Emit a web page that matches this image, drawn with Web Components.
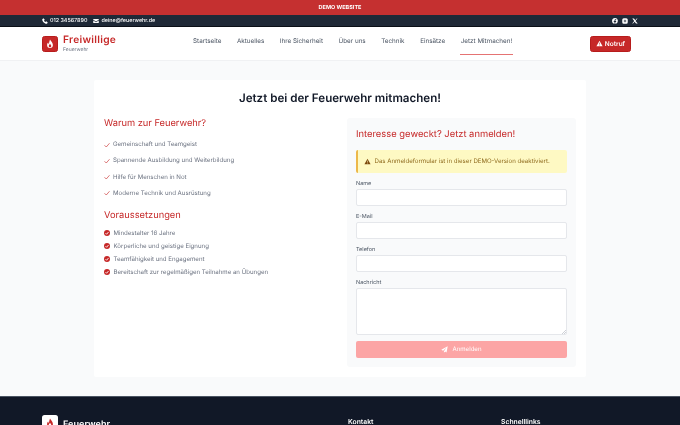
<!DOCTYPE html>
<html lang="de">
<head>
<meta charset="utf-8">
<title>Freiwillige Feuerwehr</title>
<style>
	html, body { margin: 0; padding: 0; }
	body { background: #f9fafb; font-family: Inter, "Liberation Sans", sans-serif; text-rendering: geometricPrecision; height: 425px; overflow: hidden; will-change: transform; }
</style>
</head>
<body>
<fw-topbar></fw-topbar>
<fw-header></fw-header>
<fw-main>
	<fw-benefits></fw-benefits>
	<fw-form></fw-form>
</fw-main>
<fw-footer></fw-footer>

<script>
const flame = '<path fill-rule="evenodd" d="M12 1c1 3.500 7 6.500 7 13.500a7 7 0 0 1-14 0c0-2.500 1-4.500 2.500-6 .3 1.700 1 2.800 2 3.300C10 8.500 10.500 5 12 1zm0 10.500c-.5 1.500-3 3-3 5a3 3 0 0 0 6 0c0-2-2.500-3.500-3-5z"/>';
const warn = '<path d="M12 2.500 1.500 21h21L12 2.500z"/><rect x="11" y="9" width="2" height="6.500" fill="var(--mark,#fff)"/><rect x="11" y="16.800" width="2" height="2" fill="var(--mark,#fff)"/>';

class FwTopbar extends HTMLElement {
	constructor() {
		super();
		this.attachShadow({ mode: 'open' }).innerHTML = `<style>
	:host { display: block; }
	.demo { height: 15px; background: #c53030; color: #fff; font-size: 5.500px; font-weight: 700; display: flex; align-items: center; justify-content: center; }
	.bar { height: 11px; background: #1f2937; border-bottom: 1px solid #0b0f17; color: #fff; padding: 0 42px; display: flex; align-items: center; justify-content: space-between; font-size: 5.400px; font-weight: 500; }
	.group { display: flex; align-items: center; gap: 6px; }
	.item { display: flex; align-items: center; gap: 2px; }
	svg { display: block; fill: #fff; }
</style>
<div class="demo">DEMO WEBSITE</div>
<div class="bar">
	<div class="group">
		<span class="item"><svg width="6" height="6" viewBox="0 0 24 24"><path d="M6 1l5 6-3 3c1 3 3 5 6 6l3-3 6 5-3 5C10 24 0 13 1 5z"/></svg>012 34567890</span>
		<span class="item"><svg width="6" height="6" viewBox="0 0 24 24"><path d="M1 4h22v3l-11 7L1 7zM1 10l11 7 11-7v10H1z"/></svg>deine@feuerwehr.de</span>
	</div>
	<div class="group" style="gap:4px">
		<svg width="6" height="6" viewBox="0 0 24 24"><path d="M12 0a12 12 0 0 0-2 23.800V15.500H7V12h3V9.300c0-3 1.800-4.700 4.500-4.700l2.500.2v3h-1.600c-1.500 0-1.900.9-1.900 1.900V12h3.300l-.5 3.500h-2.800v8.300A12 12 0 0 0 12 0z"/></svg>
		<svg width="6" height="6" viewBox="0 0 24 24"><path fill-rule="evenodd" d="M7 1h10a6 6 0 0 1 6 6v10a6 6 0 0 1-6 6H7a6 6 0 0 1-6-6V7a6 6 0 0 1 6-6zm5 6a5 5 0 1 0 0 10 5 5 0 0 0 0-10zm0 2a3 3 0 1 1 0 6 3 3 0 0 1 0-6z"/></svg>
		<svg width="6" height="6" viewBox="0 0 24 24"><path d="M1 2h7l5 7 6-7h3l-8 9.500L23 22h-7l-5.500-7.500L4 22H1l8-10z"/></svg>
	</div>
</div>`;
	}
}

class FwHeader extends HTMLElement {
	constructor() {
		super();
		this.attachShadow({ mode: 'open' }).innerHTML = `<style>
	:host { display: block; background: #fff; border-bottom: 1px solid #f0f1f3; height: 33px; }
	.row { height: 33px; padding: 0 49px 0 42px; display: flex; align-items: center; }
	.logo { width: 16px; height: 16px; border-radius: 2.500px; background: #c62828; border: 1px solid #b71c1c; box-sizing: border-box; display: flex; align-items: center; justify-content: center; flex: none; }
	.logo svg { display: block; fill: #fff; }
	.brand { margin-left: 5px; width: 129px; flex: none; }
	.name { color: #c62828; font-size: 10.200px; font-weight: 600; line-height: 11px; letter-spacing: .3px; }
	.sub { color: #6b7280; font-size: 5px; line-height: 6px; margin-top: 1px; }
	nav { display: flex; gap: 13.600px; flex: 1; font-size: 6.300px; color: #4b5563; height: 100%; align-items: flex-start; }
	nav a { display: flex; align-items: center; padding: 0 1px; border-bottom: 1px solid transparent; height: 27px; }
	nav a.on { border-bottom-color: #e57373; }
	.btn { width: 41px; height: 16px; flex: none; border-radius: 2.500px; background: #c62828; color: #fff; border: 1px solid #b71c1c; box-sizing: border-box; font-size: 6.500px; font-weight: 600; display: flex; align-items: center; justify-content: center; gap: 2px; --mark: #c62828; }
	.btn svg { display: block; fill: #fff; }
</style>
<div class="row">
	<div class="logo"><svg width="10" height="10" viewBox="0 0 24 24">${flame}</svg></div>
	<div class="brand"><div class="name">Freiwillige</div><div class="sub">Feuerwehr</div></div>
	<nav>
		<a>Startseite</a><a>Aktuelles</a><a>Ihre Sicherheit</a><a>Über uns</a><a>Technik</a><a>Einsätze</a><a class="on">Jetzt Mitmachen!</a>
	</nav>
	<div class="btn"><svg width="7" height="7" viewBox="0 0 24 24">${warn}</svg>Notruf</div>
</div>`;
	}
}

class FwMain extends HTMLElement {
	constructor() {
		super();
		this.attachShadow({ mode: 'open' }).innerHTML = `<style>
	:host { display: block; padding: 19px 94px; }
	.card { background: #fff; border-radius: 2px; height: 297px; padding: 10px 10px 0; box-sizing: border-box; }
	h1 { margin: 0; font-size: 11.600px; line-height: 16px; font-weight: 600; color: #111827; text-align: center; }
	.cols { display: grid; grid-template-columns: 1fr 229px; column-gap: 14px; margin-top: 12px; }
</style>
<div class="card">
	<h1>Jetzt bei der Feuerwehr mitmachen!</h1>
	<div class="cols"><slot></slot></div>
</div>`;
	}
}

class FwBenefits extends HTMLElement {
	constructor() {
		super();
		const why = ['Gemeinschaft und Teamgeist', 'Spannende Ausbildung und Weiterbildung', 'Hilfe für Menschen in Not', 'Moderne Technik und Ausrüstung'];
		const req = ['Mindestalter 16 Jahre', 'Körperliche und geistige Eignung', 'Teamfähigkeit und Engagement', 'Bereitschaft zur regelmäßigen Teilnahme an Übungen'];
		this.attachShadow({ mode: 'open' }).innerHTML = `<style>
	:host { display: block; }
	h2 { margin: 0; font-size: 9.300px; line-height: 12px; font-weight: 400; color: #c62828; }
	ul { list-style: none; margin: 0; padding: 0; }
	li { display: flex; align-items: center; font-size: 6.100px; line-height: 9px; color: #6b7280; }
	.why { margin-top: 10px; display: grid; row-gap: 7.300px; }
	.why li { gap: 3px; }
	.req { margin-top: 6.500px; display: grid; row-gap: 4px; }
	.req li { gap: 3.500px; }
	.second { margin-top: 12.500px; }
	svg { display: block; flex: none; }
</style>
<h2>Warum zur Feuerwehr?</h2>
<ul class="why">${why.map(t => `<li><svg width="6" height="6" viewBox="0 0 24 24" fill="none" stroke="#c62828" stroke-width="2.500"><path d="M2 13l7 7L22 5"/></svg>${t}</li>`).join('')}</ul>
<h2 class="second">Voraussetzungen</h2>
<ul class="req">${req.map(t => `<li><svg width="6" height="6" viewBox="0 0 24 24"><circle cx="12" cy="12" r="12" fill="#c62828"/><path d="M6 12.500l4.500 4.500L18 8" fill="none" stroke="#fff" stroke-width="3.500"/></svg>${t}</li>`).join('')}</ul>`;
	}
}

class FwField extends HTMLElement {
	constructor() {
		super();
		const multi = this.hasAttribute('multi');
		this.attachShadow({ mode: 'open' }).innerHTML = `<style>
	:host { display: block; margin-top: 8px; }
	label { display: block; font-size: 5.500px; line-height: 7px; color: #4b5563; margin-bottom: 1px; }
	.box { height: ${multi ? 47 : 17}px; box-sizing: border-box; background: #fff; border: 1px solid #e5e7eb; border-radius: 2px; position: relative; }
	.grip { position: absolute; right: 0; bottom: 0; }
</style>
<label>${this.getAttribute('label')}</label>
<div class="box">${multi ? '<svg class="grip" width="4" height="4" viewBox="0 0 4 4" stroke="#9ca3af" stroke-width=".5"><path d="M0 4l4-4M2 4l2-2"/></svg>' : ''}</div>`;
	}
}
customElements.define('fw-field', FwField);

class FwForm extends HTMLElement {
	constructor() {
		super();
		this.attachShadow({ mode: 'open' }).innerHTML = `<style>
	:host { display: block; background: #f9fafb; border-radius: 3px; padding: 10px 9px 9px; height: 249px; box-sizing: border-box; }
	h2 { margin: 0 0 9px; font-size: 9.400px; line-height: 13px; font-weight: 400; color: #c62828; }
	.alert { height: 23px; box-sizing: border-box; background: #fef9c3; border-left: 2px solid #ecb84a; border-radius: 2px; display: flex; align-items: center; gap: 3.500px; padding-left: 6px; font-size: 6.100px; color: #8f6b1e; --mark: #fef9c3; }
	.alert svg { display: block; fill: #7c4a0e; flex: none; }
	.send { height: 17px; margin-top: 6px; background: #fca5a5; border-radius: 2px; color: #fff; font-size: 6.100px; display: flex; align-items: center; justify-content: center; gap: 4px; }
	.send svg { display: block; fill: #fff; }
</style>
<h2>Interesse geweckt? Jetzt anmelden!</h2>
<div class="alert"><svg width="7" height="7" viewBox="0 0 24 24">${warn}</svg>Das Anmeldeformular ist in dieser DEMO-Version deaktiviert.</div>
<fw-field label="Name"></fw-field>
<fw-field label="E-Mail"></fw-field>
<fw-field label="Telefon"></fw-field>
<fw-field label="Nachricht" multi></fw-field>
<div class="send"><svg width="7" height="7" viewBox="0 0 24 24"><path d="M23 1 1 13l6 3 12-11-9 13v5l4-4 5 3z"/></svg>Anmelden</div>`;
	}
}

class FwFooter extends HTMLElement {
	constructor() {
		super();
		this.attachShadow({ mode: 'open' }).innerHTML = `<style>
	:host { display: block; background: #111827; border-top: 1px solid #4b5563; height: 29px; box-sizing: border-box; padding: 18px 42px 0; color: #fff; overflow: hidden; }
	.row { display: grid; grid-template-columns: 306px 153px 1fr; }
	.brand { display: flex; gap: 5px; align-items: flex-start; }
	.logo { width: 16px; height: 16px; border-radius: 2.500px; background: #fff; display: flex; align-items: center; justify-content: center; }
	.logo svg { display: block; fill: #c62828; }
	.name { font-size: 9.100px; font-weight: 600; line-height: 11px; margin-top: 4px; }
	h3 { margin: 0; font-size: 6.800px; line-height: 9px; font-weight: 600; margin-top: 2px; }
</style>
<div class="row">
	<div class="brand"><div class="logo"><svg width="10" height="10" viewBox="0 0 24 24">${flame}</svg></div><div class="name">Feuerwehr</div></div>
	<h3>Kontakt</h3>
	<h3>Schnelllinks</h3>
</div>`;
	}
}

customElements.define('fw-topbar', FwTopbar);
customElements.define('fw-header', FwHeader);
customElements.define('fw-main', FwMain);
customElements.define('fw-benefits', FwBenefits);
customElements.define('fw-form', FwForm);
customElements.define('fw-footer', FwFooter);
</script>
</body>
</html>
